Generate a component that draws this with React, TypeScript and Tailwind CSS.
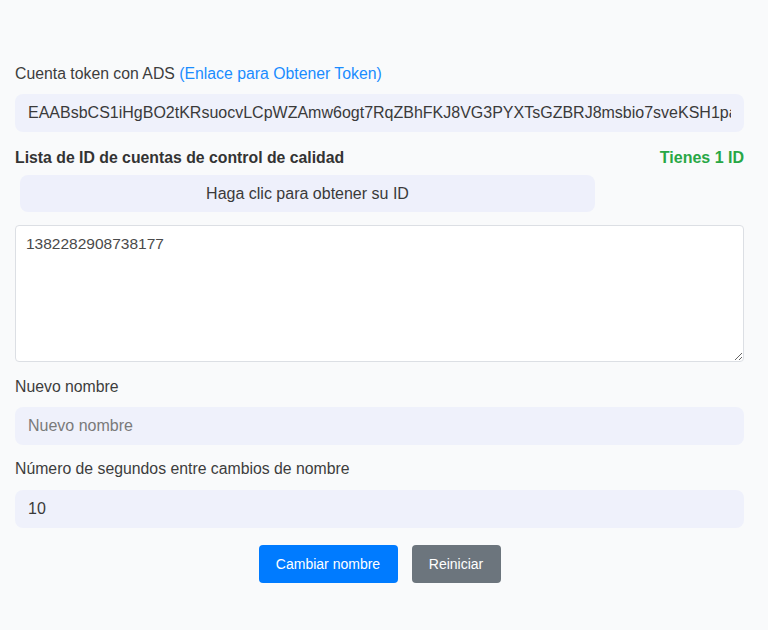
import { useState } from 'react';

const TOKEN =
  'EAABsbCS1iHgBO2tKRsuocvLCpWZAmw6ogt7RqZBhFKJ8VG3PYXTsGZBRJ8msbio7sveKSH1pa8ZCxyZB4qLm0ZD';

const inputCls =
  'block w-full h-[38px] rounded-[8px] bg-[#eff1fb] px-[13px] text-[16px] text-[#3a3a3a] placeholder:text-[#7a7a7a] outline-none';

export default function App() {
  const [ids, setIds] = useState('1382282908738177');
  const [name, setName] = useState('');
  const [secs, setSecs] = useState('10');

  const count = ids.split('\n').filter((l) => l.trim()).length;

  return (
    <div className="min-h-screen bg-[#f9fafb] font-['Liberation_Sans',Arial,sans-serif]">
      <div className="pl-[15px] pr-[24px] pt-[62px] pb-[40px]">
        <label className="block text-[15.8px] leading-[24px] text-[#3d3d3d]">
          Cuenta token con ADS{' '}
          <a href="#" className="text-[#1a8cff]">
            (Enlace para Obtener Token)
          </a>
        </label>
        <input className={`${inputCls} mt-[8px]`} defaultValue={TOKEN} />

        <div className="mt-[14px] flex items-center justify-between leading-[24px]">
          <span className="text-[15.8px] font-bold text-[#333]">
            Lista de ID de cuentas de control de calidad
          </span>
          <span className="text-[16px] font-bold text-[#28a745]">Tienes {count} ID</span>
        </div>
        <button className="mt-[5px] ml-[5px] block h-[37px] w-[575px] rounded-[8px] bg-[#eef0fb] text-[16px] text-[#3a3a3a]">
          Haga clic para obtener su ID
        </button>

        <textarea
          value={ids}
          onChange={(e) => setIds(e.target.value)}
          className="mt-[13px] block h-[137px] w-full rounded-[4px] border border-[#dcdfe4] bg-white px-[10px] py-[7px] text-[15.5px] leading-[22px] text-[#4a4a4a] outline-none"
        />

        <label className="mt-[13px] block text-[15.8px] leading-[24px] text-[#3d3d3d]">
          Nuevo nombre
        </label>
        <input
          className={`${inputCls} mt-[8px]`}
          placeholder="Nuevo nombre"
          value={name}
          onChange={(e) => setName(e.target.value)}
        />

        <label className="mt-[12px] block text-[15.8px] leading-[24px] text-[#3d3d3d]">
          Número de segundos entre cambios de nombre
        </label>
        <input
          className={`${inputCls} mt-[9px]`}
          value={secs}
          onChange={(e) => setSecs(e.target.value)}
        />

        <div className="mt-[17px] flex justify-center gap-[14px]">
          <button className="h-[38px] w-[139px] rounded-[4px] bg-[#007bff] text-[14px] text-white">
            Cambiar nombre
          </button>
          <button className="h-[38px] w-[89px] rounded-[4px] bg-[#6c757d] text-[14px] text-white">
            Reiniciar
          </button>
        </div>
      </div>
    </div>
  );
}
